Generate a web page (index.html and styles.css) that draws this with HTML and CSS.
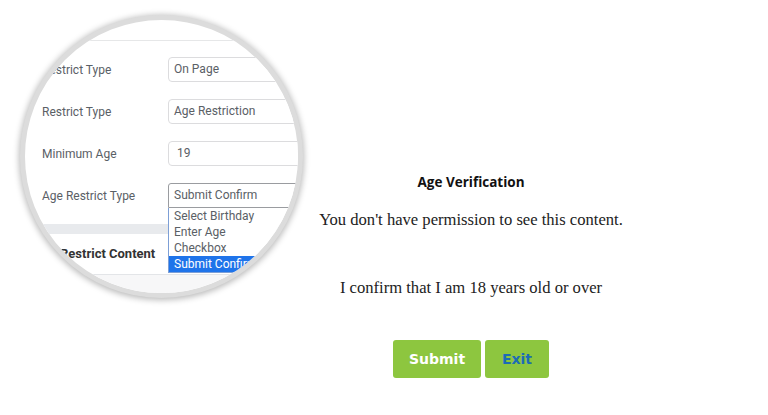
FILE: index.html
```html
<!DOCTYPE html>
<html>
<head>
<meta charset="utf-8">
<link rel="stylesheet" href="styles.css">
</head>
<body>
<div class="page">
  <div class="lens">
    <div class="lens-head"></div>
    <div class="fields">
      <div class="row"><span class="lbl">Restrict Type</span><span class="box">On Page</span></div>
      <div class="row"><span class="lbl">Restrict Type</span><span class="box">Age Restriction</span></div>
      <div class="row"><span class="lbl">Minimum Age</span><span class="box num">19</span></div>
      <div class="row drop-row"><span class="lbl">Age Restrict Type</span><span class="box select">Submit Confirm</span>
        <ul class="menu">
          <li>Select Birthday</li>
          <li>Enter Age</li>
          <li>Checkbox</li>
          <li class="sel">Submit Confirm</li>
        </ul>
      </div>
    </div>
    <div class="band"></div>
    <div class="section">Restrict Content</div>
    <div class="rest"></div>
  </div>
  <div class="panel">
    <h2 class="title">Age Verification</h2>
    <p class="msg">You don't have permission to see this content.</p>
    <p class="confirm">I confirm that I am 18 years old or over</p>
    <div class="actions">
      <button class="btn submit">Submit</button>
      <button class="btn exit">Exit</button>
    </div>
  </div>
</div>
</body>
</html>
```

FILE: styles.css
```css
html, body {
  margin: 0;
  padding: 0;
  background: #fff;
}
body {
  font-family: "Liberation Serif", serif;
  width: 768px;
  height: 415px;
  overflow: hidden;
}
.page {
  display: flex;
  align-items: flex-start;
}
.lens {
  margin: 15px 0 0 20px;
  width: 283px;
  height: 283px;
  flex: none;
  box-sizing: border-box;
  border: 5px solid #dcdcdc;
  border-radius: 50%;
  overflow: hidden;
  position: relative;
  background: #fff;
  box-shadow: 0 1px 6px 1px rgba(0,0,0,0.28);
  font-family: Roboto, "Liberation Sans", sans-serif;
  font-size: 12px;
  color: #5a6066;
}
.lens-head {
  height: 20px;
  border-bottom: 1px solid #e6e7e8;
}
.fields {
  padding: 16px 0 0 17px;
  display: flex;
  flex-direction: column;
  gap: 17px;
}
.row {
  display: flex;
  align-items: center;
  height: 25px;
}
.lbl {
  width: 126px;
  flex: none;
}
.box {
  flex: none;
  width: 200px;
  height: 25px;
  box-sizing: border-box;
  border: 1px solid #dcdcde;
  border-radius: 4px;
  padding-left: 5px;
  line-height: 23px;
  background: #fff;
}
.box.num { padding-left: 8px; }
.box.select {
  border-color: #9a9ca0;
  border-radius: 3px 3px 0 0;
}
.drop-row { position: relative; }
.menu {
  position: absolute;
  top: 25px;
  left: 126px;
  width: 200px;
  margin: 0;
  padding: 0;
  list-style: none;
  box-sizing: border-box;
  border: 1px solid #7d9fd6;
  border-top: none;
  background: #fff;
  z-index: 2;
}
.menu li {
  height: 16px;
  line-height: 16px;
  padding-left: 5px;
}
.menu li.sel {
  background: #1f74ea;
  color: #fff;
}
.band {
  margin-top: 16px;
  height: 10px;
  background: #e8eaed;
}
.section {
  height: 40px;
  line-height: 40px;
  padding-left: 35px;
  font-weight: 700;
  font-size: 13px;
  color: #333;
  border-bottom: 1px solid #e3e5e8;
}
.rest {
  height: 40px;
  background: #f7f7f8;
}
.panel {
  width: 336px;
  flex: none;
  text-align: center;
  padding-top: 173px;
  color: #222;
}
.title {
  margin: 0;
  font-family: "Open Sans", "Liberation Sans", sans-serif;
  font-weight: 700;
  font-size: 13.5px;
  line-height: 18px;
  color: #111;
}
.msg {
  margin: 19px 0 0;
  font-size: 16.6px;
  line-height: 20px;
}
.confirm {
  margin: 48px 0 0;
  font-size: 16.6px;
  line-height: 20px;
}
.actions {
  margin-top: 42px;
  display: flex;
  justify-content: center;
  gap: 4px;
}
.btn {
  height: 38px;
  border: none;
  border-radius: 3px;
  background: #8dc63f;
  font-family: "DejaVu Sans", sans-serif;
  font-weight: 700;
  font-size: 14px;
  padding: 0;
}
.submit {
  width: 88px;
  color: #fff;
}
.exit {
  width: 64px;
  color: #1c6cb5;
}
```
